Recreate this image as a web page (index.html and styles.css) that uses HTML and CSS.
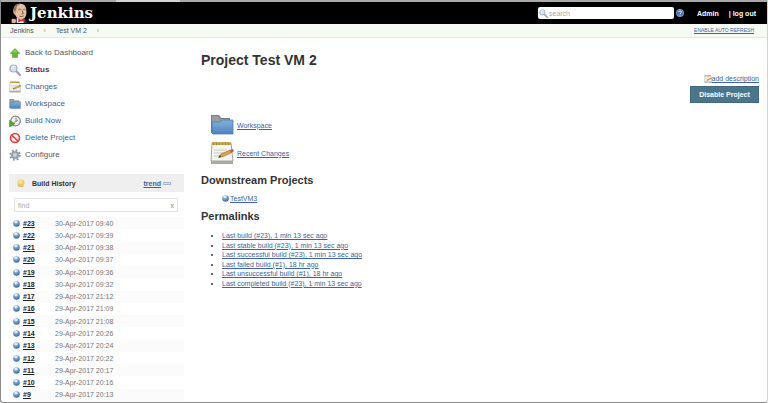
FILE: index.html
```html
<!DOCTYPE html>
<html lang="en">
<head>
  <meta charset="UTF-8">
  <meta name="viewport" content="width=device-width, initial-scale=1.0">
  <title>Test VM 2 [Jenkins]</title>
  <link rel="stylesheet" href="styles.css">
</head>
<body>
  <!-- shared icons -->
  <svg class="defs" aria-hidden="true">
    <defs>
      <radialGradient id="ballFill" cx="0.4" cy="0.25" r="0.8">
        <stop offset="0" stop-color="#e4edf7"/>
        <stop offset="0.4" stop-color="#7ba3cd"/>
        <stop offset="1" stop-color="#2f5f99"/>
      </radialGradient>
      <linearGradient id="folderFill" x1="0" y1="0" x2="0" y2="1">
        <stop offset="0" stop-color="#85b2dc"/>
        <stop offset="1" stop-color="#4b84be"/>
      </linearGradient>
      <symbol id="ball" viewBox="0 0 16 16">
        <circle cx="8" cy="8" r="7.5" fill="url(#ballFill)"/>
        <ellipse cx="7" cy="4.5" rx="4" ry="2.4" fill="#fff" opacity="0.6"/>
      </symbol>
      <symbol id="folder" viewBox="0 0 24 24">
        <path d="M1 2h8l2 3h9v15H1z" fill="#777c82"/>
        <path d="M2 3h6l2 3h9v3H2z" fill="#999ea3"/>
        <path d="M2 9h8l2-2h11v14H3l-1-1z" fill="url(#folderFill)" stroke="#4475a6" stroke-width="0.7"/>
      </symbol>
      <symbol id="notepad" viewBox="0 0 24 24">
        <path d="M2 2h19l2 18H1z" fill="#f5f5ef" stroke="#8d8d85" stroke-width="0.8"/>
        <path d="M2 1h19v3H2z" fill="#c5ad57"/>
        <path d="M3 3h1m2 0h1m2 0h1m2 0h1m2 0h1m2 0h1" stroke="#6b5d2e" stroke-width="1"/>
        <path d="M4 9h13M4 12h11M4 15h6" stroke="#c4c6c0" stroke-width="0.9"/>
        <path d="M1 20h22v3H1z" fill="#a9a9a5"/>
        <path d="M9 16l2-3 9-4 1 3-9 4z" fill="#dba34b" stroke="#8a5d25" stroke-width="0.5"/>
        <path d="M20 9l3-1 1 2-3 2z" fill="#d4513f"/>
        <path d="M8 17l2-3 1 2z" fill="#333"/>
      </symbol>
      <symbol id="magnifier" viewBox="0 0 24 24">
        <path d="M14 14l8 8" stroke="#9b9ea8" stroke-width="4" stroke-linecap="round"/>
        <circle cx="9" cy="9" r="7" fill="#d5e3f4" stroke="#a1abbb" stroke-width="2.4"/>
        <path d="M5 8a5 5 0 0 1 6-4" fill="none" stroke="#fff" stroke-width="2"/>
      </symbol>
    </defs>
  </svg>

  <div class="browser-tabs"><span class="browser-tab"></span></div>

  <header class="header">
    <a class="logo" href="#">
      <svg class="butler" viewBox="0 0 32 38">
        <path d="M3 38l6-9 15-1 7 10z" fill="#26364a"/>
        <path d="M11 28l7 3 5-3 1 10H11z" fill="#eee"/>
        <path d="M5 11C7 3 13 0 20 2c7 1 9 7 9 13 1 8-2 15-9 16-5 1-10-3-12-8-4-2-5-8-3-12z" fill="#e5bfa2"/>
        <path d="M5 11c2-7 7-9 12-9-4 2-7 5-7 10l-1 8-3-2c-2-2-2-5-1-7z" fill="#8f7663"/>
        <path d="M6 15c3-2 4 1 3 5-3 0-5-2-3-5z" fill="#d3a486"/>
        <path d="M14 13c2-2 4-2 5 0m4 0c2-2 3-1 4 0M21 14l2 6-3 1m-4 4c3 1 6 1 8-1" fill="none" stroke="#5b4032" stroke-width="1.5"/>
        <path d="M14 29l5 3 6-4 1 8-6-2-7 3z" fill="#ca3737"/>
        <path d="M1 31c3-2 7-1 9 2l-2 5H1z" fill="#d9b49a"/>
      </svg>
      <span class="logo-text">Jenkins</span>
    </a>
    <form class="search">
      <svg class="search-icon"><use href="#magnifier"/></svg>
      <input class="search-input" type="text" placeholder="search" aria-label="Search">
    </form>
    <a class="help" href="#" aria-label="Help">
      <svg class="help-icon" viewBox="0 0 16 16">
        <circle cx="8" cy="8" r="7.4" fill="#4b6fb5" stroke="#a9bde2" stroke-width="1.2"/>
        <path d="M5.3 6.2C5.5 2.8 11 3 10.8 6.2c0 1.8-2.7 2-2.7 4M8.1 11.5v1.6" fill="none" stroke="#fff" stroke-width="1.8"/>
      </svg>
    </a>
    <a class="user" href="#">Admin</a>
    <span class="logout">| <a href="#">log out</a></span>
  </header>

  <nav class="breadcrumbs">
    <a href="#">Jenkins</a>
    <span class="chevron">›</span>
    <a href="#">Test VM 2</a>
    <span class="chevron">›</span>
    <a class="auto-refresh" href="#">ENABLE AUTO REFRESH</a>
  </nav>

  <div class="page">
    <aside class="side">
      <nav class="tasks">
        <a class="task grey" href="#">
          <svg class="task-icon" viewBox="0 0 24 24"><path d="M12 3l10 10h-5v8H7v-8H2z" fill="#62b32d" stroke="#5a9f35" stroke-width="1"/><path d="M12 5l5 6H7z" fill="#8fd35c"/></svg>
          Back to Dashboard
        </a>
        <a class="task current" href="#">
          <svg class="task-icon"><use href="#magnifier"/></svg>
          Status
        </a>
        <a class="task" href="#">
          <svg class="task-icon"><use href="#notepad"/></svg>
          Changes
        </a>
        <a class="task" href="#">
          <svg class="task-icon"><use href="#folder"/></svg>
          Workspace
        </a>
        <a class="task" href="#">
          <svg class="task-icon" viewBox="0 0 24 24">
            <circle cx="13" cy="12" r="9.6" fill="#f2f3f0" stroke="#858a85" stroke-width="2.6"/>
            <path d="M14 5v8l-4 2M14 13l4-3" fill="none" stroke="#666" stroke-width="1.5"/>
            <path d="M1 11l11 6.5L1 24z" fill="#4dab29" stroke="#33841a"/>
          </svg>
          Build Now
        </a>
        <a class="task" href="#">
          <svg class="task-icon" viewBox="0 0 24 24"><circle cx="12" cy="12" r="9" fill="#f6eeee" stroke="#d64545" stroke-width="3.4"/><path d="M5 6l14 13" stroke="#d64545" stroke-width="3.4"/></svg>
          Delete Project
        </a>
        <a class="task grey" href="#">
          <svg class="task-icon" viewBox="0 0 24 24">
            <circle cx="12" cy="12" r="9.5" fill="none" stroke="#8e96a4" stroke-width="4" stroke-dasharray="3.73"/>
            <circle cx="12" cy="12" r="6" fill="#dfe3ea" stroke="#979fae" stroke-width="4"/>
            <circle cx="12" cy="12" r="2.5" fill="#fff" stroke="#858d9c"/>
          </svg>
          Configure
        </a>
      </nav>

      <section class="history">
        <div class="history-head">
          <svg class="weather" viewBox="0 0 16 16"><circle cx="8" cy="8" r="7" fill="#f4c65c"/><circle cx="7" cy="6" r="4" fill="#fbe7a4"/><path d="M1 13c2-2 4-1 5 1h8c-3 2-9 3-13-1z" fill="#d9ae67"/></svg>
          <h2 class="history-title">Build History</h2>
          <a class="trend" href="#">trend</a>
          <span class="collapse"></span>
        </div>
        <div class="find">
          <input class="find-input" type="text" placeholder="find" aria-label="Find builds">
          <button class="find-clear" type="button">x</button>
        </div>
        <table class="builds">
          <tbody>
            <tr><td class="ball-cell"><svg class="ball"><use href="#ball"/></svg></td><td class="number"><a href="#">#23</a></td><td>30-Apr-2017 09:40</td></tr>
            <tr><td class="ball-cell"><svg class="ball"><use href="#ball"/></svg></td><td class="number"><a href="#">#22</a></td><td>30-Apr-2017 09:39</td></tr>
            <tr><td class="ball-cell"><svg class="ball"><use href="#ball"/></svg></td><td class="number"><a href="#">#21</a></td><td>30-Apr-2017 09:38</td></tr>
            <tr><td class="ball-cell"><svg class="ball"><use href="#ball"/></svg></td><td class="number"><a href="#">#20</a></td><td>30-Apr-2017 09:37</td></tr>
            <tr><td class="ball-cell"><svg class="ball"><use href="#ball"/></svg></td><td class="number"><a href="#">#19</a></td><td>30-Apr-2017 09:36</td></tr>
            <tr><td class="ball-cell"><svg class="ball"><use href="#ball"/></svg></td><td class="number"><a href="#">#18</a></td><td>30-Apr-2017 09:32</td></tr>
            <tr><td class="ball-cell"><svg class="ball"><use href="#ball"/></svg></td><td class="number"><a href="#">#17</a></td><td>29-Apr-2017 21:12</td></tr>
            <tr><td class="ball-cell"><svg class="ball"><use href="#ball"/></svg></td><td class="number"><a href="#">#16</a></td><td>29-Apr-2017 21:09</td></tr>
            <tr><td class="ball-cell"><svg class="ball"><use href="#ball"/></svg></td><td class="number"><a href="#">#15</a></td><td>29-Apr-2017 21:08</td></tr>
            <tr><td class="ball-cell"><svg class="ball"><use href="#ball"/></svg></td><td class="number"><a href="#">#14</a></td><td>29-Apr-2017 20:26</td></tr>
            <tr><td class="ball-cell"><svg class="ball"><use href="#ball"/></svg></td><td class="number"><a href="#">#13</a></td><td>29-Apr-2017 20:24</td></tr>
            <tr><td class="ball-cell"><svg class="ball"><use href="#ball"/></svg></td><td class="number"><a href="#">#12</a></td><td>29-Apr-2017 20:22</td></tr>
            <tr><td class="ball-cell"><svg class="ball"><use href="#ball"/></svg></td><td class="number"><a href="#">#11</a></td><td>29-Apr-2017 20:17</td></tr>
            <tr><td class="ball-cell"><svg class="ball"><use href="#ball"/></svg></td><td class="number"><a href="#">#10</a></td><td>29-Apr-2017 20:16</td></tr>
            <tr><td class="ball-cell"><svg class="ball"><use href="#ball"/></svg></td><td class="number"><a href="#">#9</a></td><td>29-Apr-2017 20:13</td></tr>
          </tbody>
        </table>
      </section>
    </aside>

    <main class="main">
      <h1 class="title">Project Test VM 2</h1>
      <div class="actions">
        <a class="describe" href="#"><svg class="describe-icon"><use href="#notepad"/></svg>add description</a>
        <button class="disable" type="button">Disable Project</button>
      </div>

      <div class="shortcuts">
        <a class="shortcut" href="#"><svg class="shortcut-icon"><use href="#folder"/></svg>Workspace</a>
        <a class="shortcut" href="#"><svg class="shortcut-icon"><use href="#notepad"/></svg>Recent Changes</a>
      </div>

      <h2 class="section-title">Downstream Projects</h2>
      <a class="downstream" href="#"><svg class="ball"><use href="#ball"/></svg>TestVM3</a>

      <h2 class="section-title">Permalinks</h2>
      <ul class="permalinks">
        <li><a href="#">Last build (#23), 1 min 13 sec ago</a></li>
        <li><a href="#">Last stable build (#23), 1 min 13 sec ago</a></li>
        <li><a href="#">Last successful build (#23), 1 min 13 sec ago</a></li>
        <li><a href="#">Last failed build (#1), 18 hr ago</a></li>
        <li><a href="#">Last unsuccessful build (#1), 18 hr ago</a></li>
        <li><a href="#">Last completed build (#23), 1 min 13 sec ago</a></li>
      </ul>
    </main>
  </div>
</body>
</html>
```
FILE: styles.css
```css
* {
  box-sizing: border-box;
}
body {
  margin: 0;
  min-height: 100vh;
  border: 1px solid #8c8c8c;
  border-top: 0;
  border-right-color: #d0d0d0;
  border-radius: 0 0 3px 3px;
  background: #fff;
  color: #333;
  font-family: "Liberation Sans", Arial, sans-serif;
  font-size: 7px;
  line-height: 9px;
}
a {
  color: #3c64a0;
}
svg {
  flex: none;
}
.defs {
  position: absolute;
  width: 0;
  height: 0;
}
.browser-tabs {
  height: 2px;
  padding-left: 115px;
  background: #a9a9a9;
}
.browser-tab {
  display: block;
  width: 64px;
  height: 2px;
  background: #d3d3d3;
}

/* header */
.header {
  display: flex;
  align-items: center;
  height: 22px;
  padding: 0 11px 0 10px;
  background: #000;
  color: #fff;
  font-weight: bold;
}
.header a {
  color: #fff;
  text-decoration: none;
}
.logo {
  display: flex;
  align-items: center;
  gap: 2px;
  margin-right: auto;
}
.butler {
  width: 17px;
  height: 20px;
}
.logo-text {
  font-family: "DejaVu Serif", serif;
  font-size: 15px;
  line-height: 20px;
}
.search {
  display: flex;
  align-items: center;
  width: 136px;
  height: 12px;
  padding-left: 1px;
  border-radius: 2px;
  background: #fff;
}
.search-icon {
  width: 9px;
  height: 9px;
}
.search-input,
.find-input {
  flex: 1;
  min-width: 0;
  padding: 0 1px;
  border: 0;
  outline: 0;
  background: none;
  font: 7px/9px "Liberation Sans", Arial, sans-serif;
}
::placeholder {
  color: #aaa;
  opacity: 1;
}
.help {
  margin: 0 13px 0 2px;
}
.help-icon {
  display: block;
  width: 8px;
  height: 8px;
}
.user {
  margin-right: 10px;
}

/* breadcrumbs */
.breadcrumbs {
  display: flex;
  align-items: center;
  height: 14px;
  padding: 0 13px 0 9px;
  border-bottom: 1px solid #e5e8e0;
  background: #f6faf2;
}
.breadcrumbs a {
  color: #4d545d;
  text-decoration: none;
}
.chevron {
  width: 22px;
  color: #999;
  text-align: center;
}
.breadcrumbs .auto-refresh {
  margin-left: auto;
  color: #3c64a0;
  font-size: 5px;
  text-decoration: underline;
}

.page {
  display: flex;
}
.side {
  width: 183px;
  padding: 6px 0 0 8px;
}

/* task list */
.task {
  display: flex;
  align-items: center;
  gap: 4px;
  height: 17px;
  font-size: 8px;
  text-decoration: none;
}
.task-icon {
  width: 12px;
  height: 12px;
}
.task.grey {
  color: #555566;
}
.task.current {
  color: #5c3566;
  font-weight: bold;
}

/* build history */
.history {
  margin-top: 11px;
}
.history-head {
  display: flex;
  align-items: center;
  height: 18px;
  padding: 0 13px 0 8px;
  background: #efefef;
}
.weather {
  width: 8px;
  height: 8px;
}
.history-title {
  margin: 0 auto 0 7px;
  font-size: 7px;
}
.trend {
  font-weight: bold;
}
.collapse {
  width: 8px;
  height: 3px;
  margin-left: 2px;
  border: 1px solid #a9b5c8;
  background: #dce3ee;
}
.find {
  display: flex;
  align-items: center;
  height: 14px;
  margin: 6px 6px 5px 5px;
  padding: 0 3px 0 2px;
  border: 1px solid #e4e4e4;
}
.find-clear {
  padding: 0;
  border: 0;
  background: none;
  color: #888;
  font: 7px/9px "Liberation Sans", Arial, sans-serif;
}
.builds {
  width: 100%;
  height: 184px;
  border-collapse: collapse;
  color: #777;
}
.builds tr:nth-child(odd) {
  background: #fbfbfb;
}
.builds td {
  padding: 0;
}
.ball {
  display: block;
  width: 7px;
  height: 7px;
}
.builds .ball-cell {
  width: 14px;
  padding-left: 4px;
}
.builds .number {
  width: 32px;
  font-weight: bold;
}
.number a {
  color: #222;
}

/* project page */
.main {
  flex: 1;
  padding: 13px 8px 0 17px;
}
.title {
  margin: 0;
  font-size: 14px;
  line-height: 18px;
}
.actions {
  display: flex;
  flex-direction: column;
  align-items: flex-end;
  gap: 3px;
  margin: 5px 0 10px;
}
.describe {
  display: flex;
  align-items: center;
}
.describe-icon {
  width: 8px;
  height: 8px;
}
.disable {
  width: 69px;
  height: 17px;
  padding: 0;
  border: 1px solid #44697c;
  background: #4b758b;
  color: #fff;
  font: bold 7px/9px "Liberation Sans", Arial, sans-serif;
}
.shortcuts {
  display: flex;
  flex-direction: column;
  gap: 4px;
  margin: 0 0 7px 9px;
}
.shortcut {
  display: flex;
  align-items: center;
  gap: 3px;
}
.shortcut-icon {
  width: 24px;
  height: 24px;
}
.section-title {
  margin: 0;
  font-size: 11px;
  line-height: 16px;
}
.downstream {
  display: flex;
  align-items: center;
  margin: 6px 0 5px 21px;
  gap: 1px;
}
.permalinks {
  display: grid;
  height: 57px;
  margin: 7px 0 0;
  padding-left: 21px;
}
```
